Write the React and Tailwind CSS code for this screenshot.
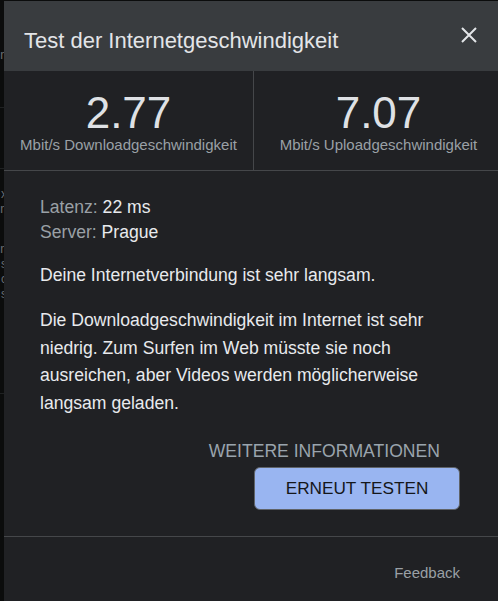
export default function App() {
  const bgLines = [
    { top: "top-[49px]", text: "n" },
    { top: "top-[188px]", text: "x" },
    { top: "top-[203px]", text: "n" },
    { top: "top-[228px]", text: "l" },
    { top: "top-[243px]", text: "n" },
    { top: "top-[258px]", text: "s" },
    { top: "top-[273px]", text: "c" },
    { top: "top-[288px]", text: "s" },
  ];

  return (
    <div className="relative flex h-[601px] w-[498px] overflow-hidden bg-[#0b0c0c] font-['Liberation_Sans',Arial,sans-serif]">
      {/* page behind the dialog, only a sliver shows */}
      <div className="relative w-[4px] shrink-0 overflow-hidden">
        {bgLines.map((l, i) => (
          <span
            key={i}
            className={`absolute right-[-3px] text-[12px] leading-none text-[#6b6f73] ${l.top}`}
          >
            {l.text}
          </span>
        ))}
        <div className="absolute left-0 top-[107px] h-px w-[4px] bg-[#1f2122]" />
        <div className="absolute left-0 top-[168px] h-px w-[4px] bg-[#1f2122]" />
        <div className="absolute left-0 top-[393px] h-px w-[4px] bg-[#1f2122]" />
      </div>

      <div className="mt-px flex w-[499px] shrink-0 flex-col bg-[#202124]">
        <div className="flex h-[70px] items-start justify-between bg-[#393c3f] pl-[20px] pr-[26px]">
          <h1 className="pt-[29px] text-[22px] leading-none text-[#e3e5e8]">
            Test der Internetgeschwindigkeit
          </h1>
          <svg className="mt-[26px]" width="16" height="16" viewBox="0 0 16 16">
            <path d="M1 1 L15 15 M15 1 L1 15" stroke="#e3e5e8" strokeWidth="2" fill="none" />
          </svg>
        </div>

        <div className="flex h-[100px] border-b border-[#45474a]">
          <div className="flex w-[250px] flex-col items-center border-r border-[#45474a] pt-[20px]">
            <div className="text-[44px] leading-none text-[#dfe1e5]">2.77</div>
            <div className="mt-[2px] text-[15px] leading-none text-[#9aa0a6]">
              Mbit/s Downloadgeschwindigkeit
            </div>
          </div>
          <div className="flex flex-1 flex-col items-center pt-[20px]">
            <div className="text-[44px] leading-none text-[#dfe1e5]">7.07</div>
            <div className="mt-[2px] text-[15px] leading-none text-[#9aa0a6]">
              Mbit/s Uploadgeschwindigkeit
            </div>
          </div>
        </div>

        <div className="flex h-[366px] flex-col border-b border-[#45474a] pl-[36px] pr-[43px] pt-[24px] text-[17.6px]">
          <div className="leading-[25px]">
            <p>
              <span className="text-[#9aa0a6]">Latenz: </span>
              <span className="text-[#e8eaed]">22 ms</span>
            </p>
            <p>
              <span className="text-[#9aa0a6]">Server: </span>
              <span className="text-[#e8eaed]">Prague</span>
            </p>
          </div>
          <p className="mt-[17px] leading-[27.5px] text-[#e8eaed]">
            Deine Internetverbindung ist sehr langsam.
          </p>
          <p className="mt-[17.5px] leading-[27.5px] text-[#e8eaed]">
            Die Downloadgeschwindigkeit im Internet ist sehr niedrig. Zum Surfen im Web müsste sie
            noch ausreichen, aber Videos werden möglicherweise langsam geladen.
          </p>
          <div className="mt-[21px] self-end pr-[20px] leading-[27.5px] text-[#9aa4ad]">
            WEITERE INFORMATIONEN
          </div>
          <button className="mt-[1.5px] h-[43px] w-[206px] self-end rounded-[6px] border border-[#5f6368] bg-[#99b5f1] text-[17.2px] leading-none text-[#15171a]">
            ERNEUT TESTEN
          </button>
        </div>

        <div className="flex justify-end pr-[43px] pt-[26px]">
          <span className="text-[15px] leading-[20px] text-[#9aa0a6]">Feedback</span>
        </div>
      </div>
    </div>
  );
}
